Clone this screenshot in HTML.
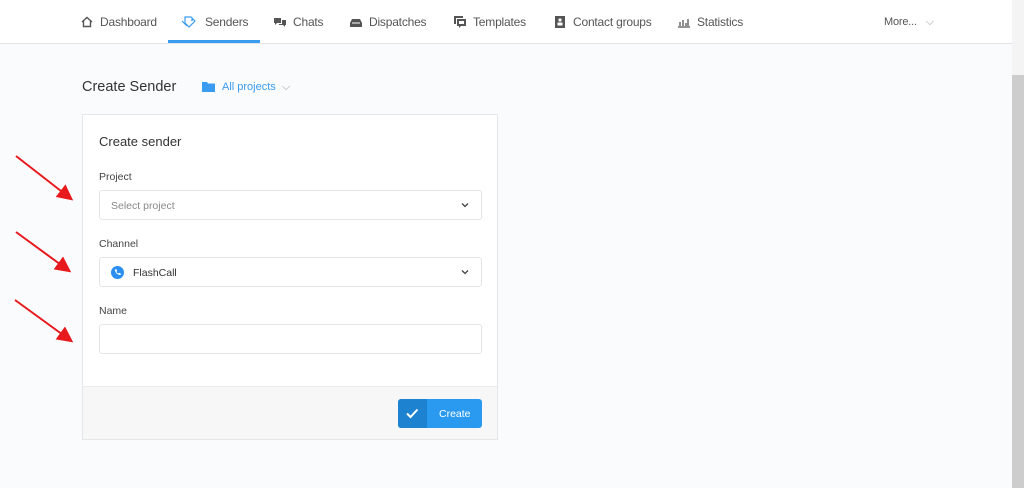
<!DOCTYPE html>
<html><head><style>
*{box-sizing:border-box;margin:0;padding:0}
body{width:1024px;height:488px;overflow:hidden;background:#fafbfd;font-family:"Liberation Sans",sans-serif;position:relative;color:#333}
.nav{position:absolute;left:0;top:0;width:1012px;height:44px;background:#fff;border-bottom:1px solid #e2e4e8}
.ni{position:absolute;top:15px;font-size:12px;letter-spacing:-0.2px;color:#555;white-space:nowrap}
.ni svg{position:absolute;left:-20px;top:0}
.act{position:absolute;left:168px;top:40px;width:92px;height:3px;background:#3a9cf0}
.sb{position:absolute;left:1012px;top:0;width:12px;height:488px;background:#f4f4f4}
.th{position:absolute;left:1012px;top:75px;width:12px;height:413px;background:#cdcdcd}
h1{position:absolute;left:82px;top:79px;font-size:14.5px;font-weight:normal;color:#333}
.ap{position:absolute;left:222px;top:81px;font-size:11px;color:#3a9cf0}
.card{position:absolute;left:82px;top:114px;width:416px;height:326px;background:#fff;border:1px solid #e6e7ea}
.ft{position:absolute;left:0;top:271px;width:414px;height:53px;background:#f7f7f8;border-top:1px solid #ebebeb}
.lbl{position:absolute;left:16px;font-size:10.5px;color:#444}
.inp{position:absolute;left:16px;width:383px;height:30px;border:1px solid #e3e5e9;border-radius:3px;background:#fff;font-size:10.5px}
.chev{position:absolute;right:12px;top:10px}
.btn{position:absolute;left:315px;top:12px;width:84px;height:29px;border-radius:3px;background:#2a9af0;overflow:hidden}
.btn .ic{position:absolute;left:0;top:0;width:29px;height:29px;background:#1d82d0}
.btn span{position:absolute;left:41px;top:9px;color:#fff;font-size:10.5px}
</style></head><body>
<div class="nav">
<div class="ni" style="left:100px"><svg width="14" height="14" viewBox="0 0 14 14"><path d="M2 7L7 2.5L12 7M3.5 6v5.5h7V6" fill="none" stroke="#555" stroke-width="1.4"/></svg>Dashboard</div>
<div class="ni" style="left:205px"><svg width="16" height="14" viewBox="0 0 16 14" style="left:-24px"><path d="M4 2h6l4 4-6 6-4-4z" fill="none" stroke="#3a9cf0" stroke-width="1.2"/><path d="M1 6l5 5" stroke="#3a9cf0" stroke-width="1.2"/><circle cx="11" cy="5" r="1" fill="#3a9cf0"/></svg>Senders</div>
<div class="ni" style="left:293px"><svg width="14" height="14" viewBox="0 0 14 14"><path d="M1 3h7v5H4l-2 2V8H1z M9 5h4v5h-1v2l-2-2H6V9h3z" fill="#555"/></svg>Chats</div>
<div class="ni" style="left:369px"><svg width="14" height="14" viewBox="0 0 14 14"><path d="M3 4h8l2 4v4H1V8z" fill="#555"/><path d="M3 8h8" stroke="#fff"/></svg>Dispatches</div>
<div class="ni" style="left:473px"><svg width="14" height="14" viewBox="0 0 14 14"><path d="M1 1h9v2H3v6H1z M4 4h9v7H8l-2 2v-2H4z" fill="#555"/><rect x="6" y="6" width="5" height="3" fill="#fff"/></svg>Templates</div>
<div class="ni" style="left:573px"><svg width="14" height="14" viewBox="0 0 14 14"><rect x="2" y="1" width="10" height="12" fill="#555"/><circle cx="7" cy="5" r="1.6" fill="#fff"/><rect x="4.5" y="7.5" width="5" height="3" fill="#fff"/></svg>Contact groups</div>
<div class="ni" style="left:697px"><svg width="14" height="14" viewBox="0 0 14 14"><path d="M1 12h12M3 11V7M6 11V5M9 11V8M11 11V4" stroke="#555" stroke-width="1.3"/></svg>Statistics</div>
<div class="ni" style="left:884px;font-size:11px;top:16px">More... <span style="color:#999;margin-left:6px">⌵</span></div>
<div class="act"></div>
</div>
<div class="sb"></div><div class="th"></div>
<h1>Create Sender</h1>
<svg style="position:absolute;left:202px;top:81px" width="14" height="12" viewBox="0 0 14 12"><path d="M0 1h5l1 1.5h7V11H0z" fill="#3a9cf0"/></svg>
<div class="ap">All projects <span style="color:#999;margin-left:3px">⌵</span></div>
<div class="card">
<div style="position:absolute;left:16px;top:19px;font-size:13px;color:#333">Create sender</div>
<div class="lbl" style="top:56px">Project</div>
<div class="inp" style="top:75px"><span style="position:absolute;left:11px;top:9px;color:#888">Select project</span><svg class="chev" width="8" height="8" viewBox="0 0 8 8"><path d="M1 2.5l3 3 3-3" fill="none" stroke="#444" stroke-width="1.3"/></svg></div>
<div class="lbl" style="top:123px">Channel</div>
<div class="inp" style="top:142px"><svg style="position:absolute;left:11px;top:8px" width="13" height="13" viewBox="0 0 13 13"><circle cx="6.5" cy="6.5" r="6.5" fill="#2a8ff0"/><path d="M4 3.5l1.2-.5 1 2-.8.7c.4.9 1 1.5 1.9 1.9l.7-.8 2 1-.5 1.2c-3 .2-5.7-2.5-5.5-5.5z" fill="#fff"/></svg><span style="position:absolute;left:33px;top:9px;color:#333">FlashCall</span><svg class="chev" width="8" height="8" viewBox="0 0 8 8"><path d="M1 2.5l3 3 3-3" fill="none" stroke="#444" stroke-width="1.3"/></svg></div>
<div class="lbl" style="top:190px">Name</div>
<div class="inp" style="top:209px"></div>
<div class="ft"><div class="btn"><div class="ic"><svg width="29" height="29" viewBox="0 0 29 29"><path d="M9 14.5l3.5 3.5 7-7.5" fill="none" stroke="#fff" stroke-width="2"/></svg></div><span>Create</span></div></div>
</div>
<svg style="position:absolute;left:0;top:0" width="100" height="360"><defs><marker id="a" markerWidth="8" markerHeight="8" refX="6" refY="4" orient="auto"><path d="M0 0L8 4L0 8z" fill="#e8191c"/></marker></defs><g stroke="#e8191c" stroke-width="2" marker-end="url(#a)"><line x1="16" y1="156" x2="70" y2="198"/><line x1="16" y1="232" x2="68" y2="270"/><line x1="15" y1="300" x2="70" y2="340"/></g></svg>
</body></html>
